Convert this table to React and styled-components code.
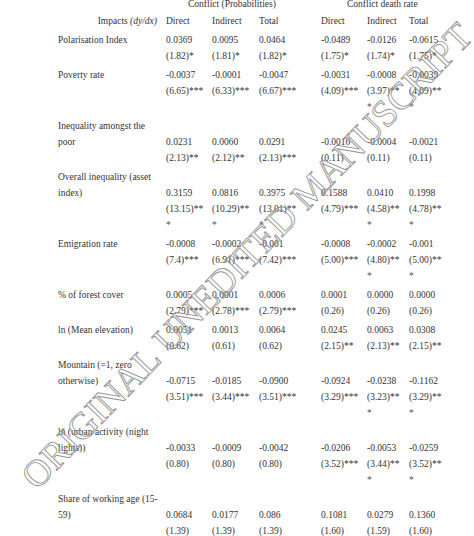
import styled, { createGlobalStyle } from "styled-components";

const GlobalStyle = createGlobalStyle`
  html, body {
    margin: 0;
    padding: 0;
    background: #fff;
  }
  body {
    font-family: "Liberation Serif", "Times New Roman", serif;
    color: #333;
  }
`;

const Page = styled.div`
  position: relative;
  width: 474px;
  height: 536px;
  overflow: hidden;
  background: #fff;
`;

const Table = styled.div`
  display: flex;
  flex-direction: column;
  margin-top: -4px;
  padding-left: 58px;
  font-size: 9.5px;
  line-height: 16px;
`;

const Row = styled.div`
  display: grid;
  grid-template-columns: 108px 46px 47px 62px 46px 42px 1fr;
  padding: ${(p) => p.$pad ?? 1.5}px 0;
`;

const Cell = styled.div`
  display: flex;
  flex-direction: column;
  white-space: nowrap;
`;

const Line = styled.span`
  display: block;
  height: 16px;
`;

const Star = styled.span`
  color: #555;
`;

const GroupHead = styled.div`
  grid-column: ${(p) => p.$cols};
  padding-left: ${(p) => p.$indent}px;
  white-space: nowrap;
`;

const Impacts = styled.div`
  text-align: right;
  padding-right: 9px;
  white-space: nowrap;

  em {
    font-style: italic;
  }
`;

// diagonal stamp laid over the scanned table
const Watermark = styled.div`
  position: absolute;
  left: 247px;
  top: 256px;
  transform: translate(-50%, -50%) rotate(-46deg);
  font-family: "Liberation Serif", "Times New Roman", serif;
  font-size: 37.5px;
  line-height: 1;
  white-space: nowrap;
  color: transparent;
  -webkit-text-stroke: 0.9px #959595;
  pointer-events: none;
`;

const rows = [
  {
    label: ["Polarisation Index"],
    cells: [
      ["0.0369", "(1.82)*"],
      ["0.0095", "(1.81)*"],
      ["0.0464", "(1.82)*"],
      ["-0.0489", "(1.75)*"],
      ["-0.0126", "(1.74)*"],
      ["-0.0615", "(1.75)*"],
    ],
  },
  {
    label: ["Poverty rate"],
    cells: [
      ["-0.0037", "(6.65)***"],
      ["-0.0001", "(6.33)***"],
      ["-0.0047", "(6.67)***"],
      ["-0.0031", "(4.09)***"],
      ["-0.0008", "(3.97)**", "*"],
      ["-0.0039", "(4.09)**", "*"],
    ],
  },
  {
    label: ["Inequality amongst the", "poor"],
    cells: [
      ["", "0.0231", "(2.13)**"],
      ["", "0.0060", "(2.12)**"],
      ["", "0.0291", "(2.13)***"],
      ["", "-0.0016", "(0.11)"],
      ["", "-0.0004", "(0.11)"],
      ["", "-0.0021", "(0.11)"],
    ],
  },
  {
    label: ["Overall inequality (asset", "index)"],
    cells: [
      ["", "0.3159", "(13.15)**", "*"],
      ["", "0.0816", "(10.29)**", "*"],
      ["", "0.3975", "(13.01)**", "*"],
      ["", "0.1588", "(4.79)***"],
      ["", "0.0410", "(4.58)**", "*"],
      ["", "0.1998", "(4.78)**", "*"],
    ],
  },
  {
    label: ["Emigration rate"],
    cells: [
      ["-0.0008", "(7.4)***"],
      ["-0.0002", "(6.91)***"],
      ["-0.001", "(7.42)***"],
      ["-0.0008", "(5.00)***"],
      ["-0.0002", "(4.80)**", "*"],
      ["-0.001", "(5.00)**", "*"],
    ],
  },
  {
    label: ["% of forest cover"],
    cells: [
      ["0.0005", "(2.79)***"],
      ["0.0001", "(2.78)***"],
      ["0.0006", "(2.79)***"],
      ["0.0001", "(0.26)"],
      ["0.0000", "(0.26)"],
      ["0.0000", "(0.26)"],
    ],
  },
  {
    label: ["ln (Mean elevation)"],
    cells: [
      ["0.0051", "(0.62)"],
      ["0.0013", "(0.61)"],
      ["0.0064", "(0.62)"],
      ["0.0245", "(2.15)**"],
      ["0.0063", "(2.13)**"],
      ["0.0308", "(2.15)**"],
    ],
  },
  {
    label: ["Mountain (=1, zero", "otherwise)"],
    cells: [
      ["", "-0.0715", "(3.51)***"],
      ["", "-0.0185", "(3.44)***"],
      ["", "-0.0900", "(3.51)***"],
      ["", "-0.0924", "(3.29)***"],
      ["", "-0.0238", "(3.23)**", "*"],
      ["", "-0.1162", "(3.29)**", "*"],
    ],
  },
  {
    label: ["ln (urban activity (night", "lights))"],
    cells: [
      ["", "-0.0033", "(0.80)"],
      ["", "-0.0009", "(0.80)"],
      ["", "-0.0042", "(0.80)"],
      ["", "-0.0206", "(3.52)***"],
      ["", "-0.0053", "(3.44)**", "*"],
      ["", "-0.0259", "(3.52)**", "*"],
    ],
  },
  {
    label: ["Share of working age (15-", "59)"],
    cells: [
      ["", "0.0684", "(1.39)"],
      ["", "0.0177", "(1.39)"],
      ["", "0.086", "(1.39)"],
      ["", "0.1081", "(1.60)"],
      ["", "0.0279", "(1.59)"],
      ["", "0.1360", "(1.60)"],
    ],
  },
];

const renderLine = (text, i) => (
  <Line key={i}>{text === "*" ? <Star>*</Star> : text}</Line>
);

export default function App() {
  return (
    <Page>
      <GlobalStyle />
      <Table>
        <Row $pad={0}>
          <div />
          <GroupHead $cols="2 / 5" $indent={22}>
            Conflict (Probabilities)
          </GroupHead>
          <GroupHead $cols="5 / 8" $indent={26}>
            Conflict death rate
          </GroupHead>
        </Row>
        <Row $pad={1}>
          <Impacts>
            Impacts <em>(dy/dx)</em>
          </Impacts>
          <Cell>Direct</Cell>
          <Cell>Indirect</Cell>
          <Cell>Total</Cell>
          <Cell>Direct</Cell>
          <Cell>Indirect</Cell>
          <Cell>Total</Cell>
        </Row>
        {rows.map((row) => (
          <Row key={row.label[0]}>
            <Cell>{row.label.map(renderLine)}</Cell>
            {row.cells.map((lines, i) => (
              <Cell key={i}>{lines.map(renderLine)}</Cell>
            ))}
          </Row>
        ))}
      </Table>
      <Watermark>ORIGINAL UNEDITED MANUSCRIPT</Watermark>
    </Page>
  );
}
